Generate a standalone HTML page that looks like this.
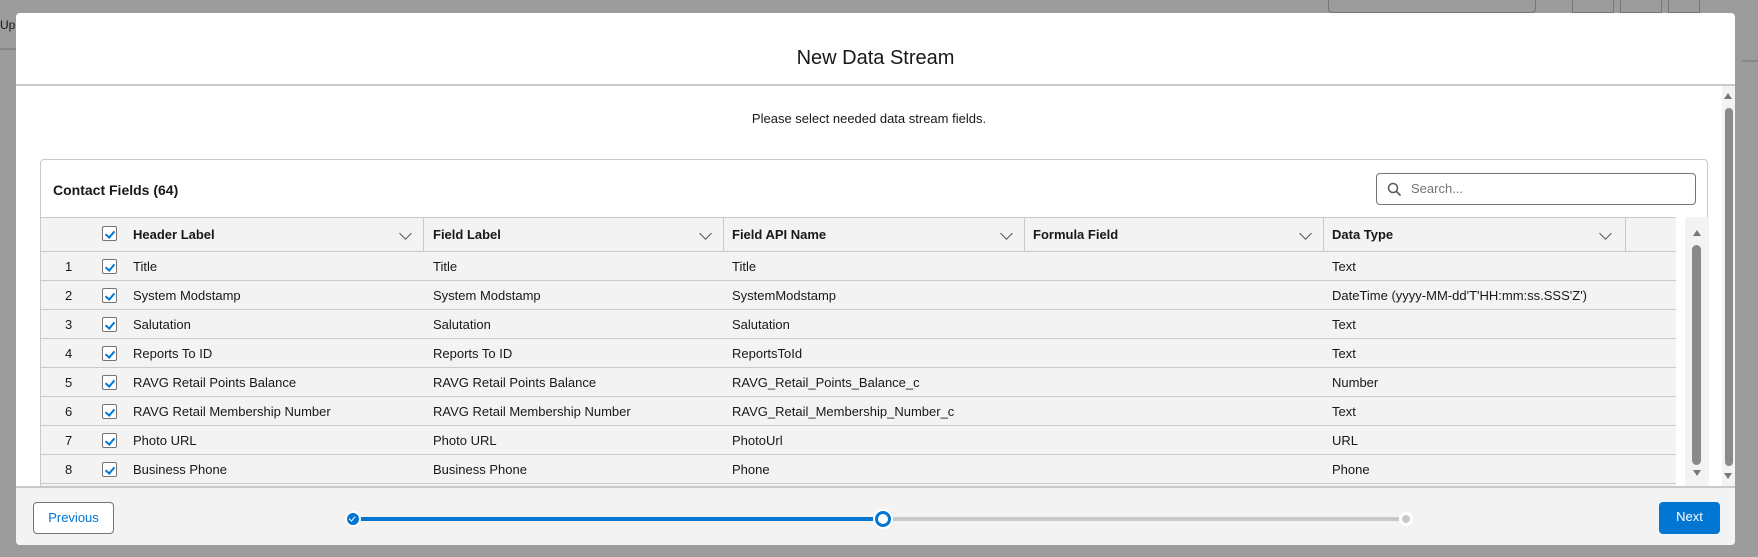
<!DOCTYPE html>
<html><head><meta charset="utf-8"><style>
*{box-sizing:border-box;margin:0;padding:0}
body{width:1758px;height:557px;overflow:hidden;background:#9c9c9c;font-family:"Liberation Sans",sans-serif;color:#181818;position:relative}
.abs{position:absolute}
.modal{left:16px;top:13px;width:1719px;height:532px;background:#fff;border-radius:4px;overflow:hidden}
.title{left:0;top:0;width:100%;height:73px;text-align:center;line-height:90px;font-size:20px;border-bottom:2px solid #c9c9c9}
.sub{left:0;top:98px;width:1706px;text-align:center;font-size:13px}
.card{left:24px;top:146px;width:1668px;height:400px;border:1px solid #c9c9c9;border-radius:4px;background:#fff}
.ct{left:12px;top:22px;font-size:14px;font-weight:bold}
.search{left:1335px;top:13px;width:320px;height:32px;border:1px solid #747474;border-radius:4px;font-size:13px;color:#747474;padding:0 0 0 34px;line-height:30px}
.th{left:0;top:57px;width:1635px;height:35px;background:#f3f3f3;border-top:1px solid #c9c9c9;border-bottom:1px solid #c9c9c9}
.col{position:absolute;top:0;height:33px;line-height:33px;font-weight:bold;font-size:13px}
.div{position:absolute;top:0;width:1px;height:33px;background:#c9c9c9}
.chev{position:absolute;top:11px;width:9px;height:9px;border-right:1.5px solid #555;border-bottom:1.5px solid #555;transform:rotate(45deg)}
.row{position:absolute;left:0;width:1635px;height:29px;background:#f3f3f3;border-bottom:1px solid #c9c9c9;font-size:13px;line-height:29px}
.row span{position:absolute}
.cb{position:absolute;width:15px;height:15px;border:1px solid #747474;border-radius:2px;background:#fff}
.cb:after{content:"";position:absolute;left:4px;top:2px;width:4px;height:7px;border-right:2px solid #0176d3;border-bottom:2px solid #0176d3;transform:rotate(40deg)}
.footer{left:0;top:473px;width:100%;height:59px;background:#f3f3f3;border-top:2px solid #c9c9c9}
.btn{position:absolute;top:14px;height:32px;border-radius:4px;font-size:13px;line-height:30px;text-align:center}
</style></head><body>
<div class="abs" style="left:0;top:18px;font-size:12px;color:#181818">Up</div>
<div class="abs" style="left:0;top:48px;width:16px;height:2px;background:#888"></div>
<div class="abs" style="left:1328px;top:0;width:208px;height:13px;border:1px solid #777;border-top:none;border-radius:0 0 4px 4px"></div>
<div class="abs" style="left:1572px;top:0;width:42px;height:13px;border:1px solid #777;border-top:none"></div>
<div class="abs" style="left:1620px;top:0;width:42px;height:13px;border:1px solid #777;border-top:none"></div>
<div class="abs" style="left:1668px;top:0;width:32px;height:13px;border:1px solid #777;border-top:none"></div>
<div class="abs" style="left:1742px;top:60px;width:16px;height:2px;background:#888"></div>
<div class="abs modal">
  <div class="abs title">New Data Stream</div>
  <div class="abs sub">Please select needed data stream fields.</div>
  <div class="abs card">
    <div class="abs ct">Contact Fields (64)</div>
    <div class="abs search"><svg class="abs" style="left:10px;top:8px" width="15" height="15" viewBox="0 0 15 15"><circle cx="6" cy="6" r="4.5" fill="none" stroke="#555" stroke-width="1.5"/><path d="M9.3 9.3L13.5 13.5" stroke="#555" stroke-width="1.6"/></svg>Search...</div>
    <div class="abs th">
      <div class="cb" style="left:61px;top:8px"></div>
      <div class="col" style="left:92px">Header Label</div><div class="chev" style="left:360px"></div><div class="div" style="left:382px"></div>
      <div class="col" style="left:392px">Field Label</div><div class="chev" style="left:660px"></div><div class="div" style="left:682px"></div>
      <div class="col" style="left:691px">Field API Name</div><div class="chev" style="left:961px"></div><div class="div" style="left:983px"></div>
      <div class="col" style="left:992px">Formula Field</div><div class="chev" style="left:1260px"></div><div class="div" style="left:1282px"></div>
      <div class="col" style="left:1291px">Data Type</div><div class="chev" style="left:1560px"></div><div class="div" style="left:1584px"></div>
    </div>
    <div class="abs" style="left:1644px;top:57px;width:24px;height:350px;background:#f3f3f3"></div>
    <div class="abs" style="left:1652px;top:70px;border:4px solid transparent;border-bottom:6px solid #777;border-top:none"></div>
    <div class="abs" style="left:1651px;top:85px;width:9px;height:220px;border-radius:5px;background:#8a8a8a"></div>
    <div class="abs" style="left:1652px;top:310px;border:4px solid transparent;border-top:6px solid #777;border-bottom:none"></div>
    <div id="rows"></div>
  </div>
  <div class="abs" style="left:1706px;top:73px;width:13px;height:400px;background:#f3f3f3"></div>
  <div class="abs" style="left:1708px;top:80px;border:4px solid transparent;border-bottom:6px solid #777;border-top:none"></div>
  <div class="abs" style="left:1709px;top:95px;width:8px;height:358px;border-radius:4px;background:#8a8a8a"></div>
  <div class="abs" style="left:1708px;top:460px;border:4px solid transparent;border-top:6px solid #777;border-bottom:none"></div>
  <div class="abs footer">
    <div class="btn" style="left:17px;width:81px;border:1px solid #747474;background:#fff;color:#0176d3">Previous</div>
    <div class="btn" style="left:1643px;width:61px;background:#0176d3;color:#fff">Next</div>
    <div class="abs" style="left:340px;top:29px;width:530px;height:4px;background:#0176d3"></div>
    <div class="abs" style="left:870px;top:29px;width:520px;height:4px;background:#c9c9c9"></div>
    <div class="abs" style="left:329px;top:23px;width:16px;height:16px;border-radius:50%;background:#0176d3;border:2px solid #fff"></div>
    <div class="abs" style="left:334px;top:27px;width:4px;height:6px;border-right:1.5px solid #fff;border-bottom:1.5px solid #fff;transform:rotate(40deg)"></div>
    <div class="abs" style="left:857px;top:21px;width:20px;height:20px;border-radius:50%;background:#0176d3;border:2px solid #fff"></div>
    <div class="abs" style="left:862px;top:26px;width:10px;height:10px;border-radius:50%;background:#fff"></div>
    <div class="abs" style="left:1383px;top:24px;width:14px;height:14px;border-radius:50%;background:#c9c9c9;border:3px solid #fff"></div>
  </div>
</div>
<script>
var d=[["Title","Title","Title","Text"],["System Modstamp","System Modstamp","SystemModstamp","DateTime (yyyy-MM-dd'T'HH:mm:ss.SSS'Z')"],["Salutation","Salutation","Salutation","Text"],["Reports To ID","Reports To ID","ReportsToId","Text"],["RAVG Retail Points Balance","RAVG Retail Points Balance","RAVG_Retail_Points_Balance_c","Number"],["RAVG Retail Membership Number","RAVG Retail Membership Number","RAVG_Retail_Membership_Number_c","Text"],["Photo URL","Photo URL","PhotoUrl","URL"],["Business Phone","Business Phone","Phone","Phone"],["Birthdate","Birthdate","Birthdate","Date"]];
var h="";d.forEach(function(r,i){h+='<div class="row" style="top:'+(92+i*29)+'px"><span style="left:24px">'+(i+1)+'</span><div class="cb" style="left:61px;top:7px"></div><span style="left:92px">'+r[0]+'</span><span style="left:392px">'+r[1]+'</span><span style="left:691px">'+r[2]+'</span><span style="left:1291px">'+r[3]+'</span></div>'});
document.getElementById("rows").innerHTML=h;
</script>
</body></html>
